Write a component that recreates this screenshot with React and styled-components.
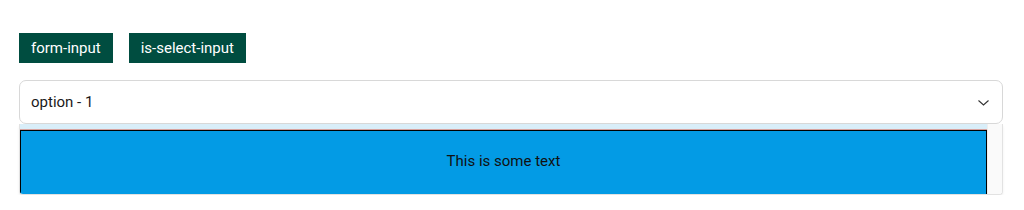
import React from "react";
import styled, { createGlobalStyle } from "styled-components";

const Global = createGlobalStyle`
  html, body { margin: 0; padding: 0; background: #fff; }
  body { font-family: Roboto, "Noto Sans", Arial, sans-serif; }
`;

const Page = styled.div`
  padding: 33px 21px 0 19px;
  display: flex;
  flex-direction: column;
`;

const TagRow = styled.div`
  display: flex;
  gap: 16px;
`;

const Tag = styled.span`
  display: inline-flex;
  align-items: center;
  height: 30px;
  padding: 0 12px;
  background: #004d40;
  color: #fff;
  font-size: 15px;
  line-height: 1;
`;

const Field = styled.div`
  margin-top: 17px;
  display: flex;
  flex-direction: column;
`;

const Control = styled.div`
  height: 42px;
  border: 1px solid #d8d8d8;
  border-radius: 7px;
  display: flex;
  align-items: center;
  justify-content: space-between;
  padding: 0 12px 0 11px;
  font-size: 15px;
  color: #1a1a1a;
  background: #fff;
`;

const Menu = styled.div`
  height: 70px;
  border: 1px solid #e2e2e2;
  border-top: none;
  border-radius: 0 0 4px 4px;
  box-shadow: 0 2px 3px rgba(0, 0, 0, 0.06);
  display: flex;
  overflow: hidden;
  background: #fff;
`;

const List = styled.div`
  flex: 1;
  display: flex;
  flex-direction: column;
  overflow: hidden;
`;

const PrevOption = styled.div`
  flex: none;
  height: 5px;
  background: #d9eef9;
  border-bottom: 1px solid #d7a3a0;
`;

const Option = styled.div`
  flex: none;
  height: 66px;
  border: 1px solid #000;
  background: #039be5;
  display: flex;
  align-items: center;
  justify-content: center;
  padding-bottom: 4px;
  box-sizing: border-box;
  font-size: 15px;
  color: #111;
`;

const Track = styled.div`
  width: 14px;
  background: #fafafa;
  border-left: 1px solid #eeeeee;
`;

const Chevron = () => (
  <svg width="13" height="13" viewBox="0 0 13 13" fill="none">
    <path d="M1.5 4.5 L6.5 9 L11.5 4.5" stroke="#333" strokeWidth="1.1" />
  </svg>
);

export default function App() {
  return (
    <>
      <Global />
      <Page>
        <TagRow>
          <Tag>form-input</Tag>
          <Tag>is-select-input</Tag>
        </TagRow>
        <Field>
          <Control>
            <span>option - 1</span>
            <Chevron />
          </Control>
          <Menu>
            <List>
              <PrevOption />
              <Option>This is some text</Option>
            </List>
            <Track />
          </Menu>
        </Field>
      </Page>
    </>
  );
}
